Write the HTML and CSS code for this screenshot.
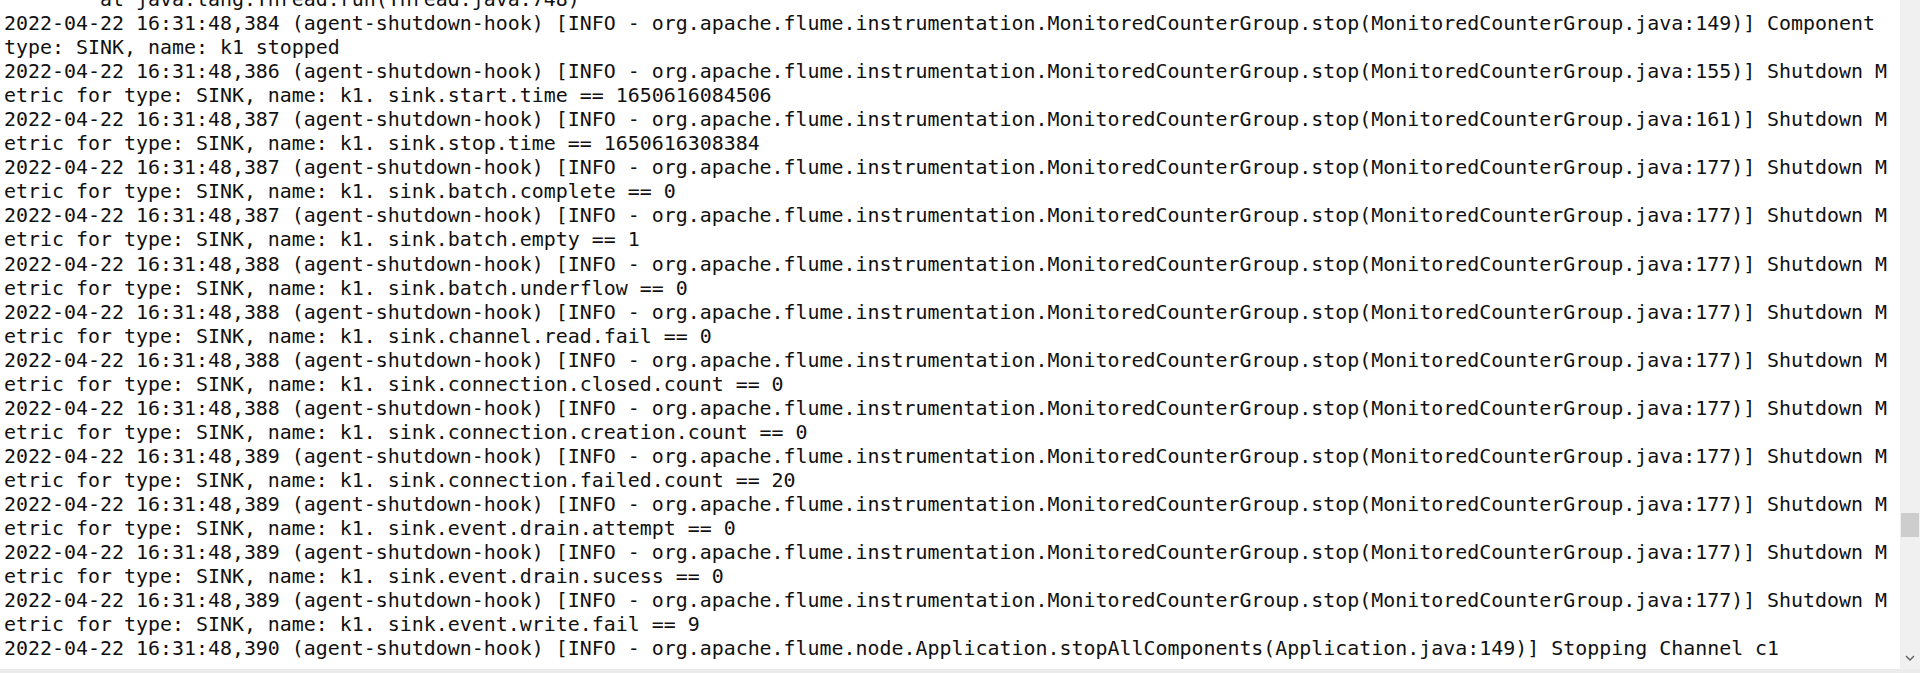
FILE: index.html
```html
<!DOCTYPE html>
<html lang="en">

<head>
    <meta charset="UTF-8">
    <meta name="viewport" content="width=device-width, initial-scale=1.0">
    <title>flume-ng agent</title>
    <link rel="stylesheet" href="styles.css">
</head>

<body>
    <div class="window">
        <div class="console">
            <div class="output">
                <div class="line">        at java.lang.Thread.run(Thread.java:748)</div>
                <div class="line">2022-04-22 16:31:48,384 (agent-shutdown-hook) [INFO - org.apache.flume.instrumentation.MonitoredCounterGroup.stop(MonitoredCounterGroup.java:149)] Component</div>
                <div class="line">type: SINK, name: k1 stopped</div>
                <div class="line">2022-04-22 16:31:48,386 (agent-shutdown-hook) [INFO - org.apache.flume.instrumentation.MonitoredCounterGroup.stop(MonitoredCounterGroup.java:155)] Shutdown M</div>
                <div class="line">etric for type: SINK, name: k1. sink.start.time == 1650616084506</div>
                <div class="line">2022-04-22 16:31:48,387 (agent-shutdown-hook) [INFO - org.apache.flume.instrumentation.MonitoredCounterGroup.stop(MonitoredCounterGroup.java:161)] Shutdown M</div>
                <div class="line">etric for type: SINK, name: k1. sink.stop.time == 1650616308384</div>
                <div class="line">2022-04-22 16:31:48,387 (agent-shutdown-hook) [INFO - org.apache.flume.instrumentation.MonitoredCounterGroup.stop(MonitoredCounterGroup.java:177)] Shutdown M</div>
                <div class="line">etric for type: SINK, name: k1. sink.batch.complete == 0</div>
                <div class="line">2022-04-22 16:31:48,387 (agent-shutdown-hook) [INFO - org.apache.flume.instrumentation.MonitoredCounterGroup.stop(MonitoredCounterGroup.java:177)] Shutdown M</div>
                <div class="line">etric for type: SINK, name: k1. sink.batch.empty == 1</div>
                <div class="line">2022-04-22 16:31:48,388 (agent-shutdown-hook) [INFO - org.apache.flume.instrumentation.MonitoredCounterGroup.stop(MonitoredCounterGroup.java:177)] Shutdown M</div>
                <div class="line">etric for type: SINK, name: k1. sink.batch.underflow == 0</div>
                <div class="line">2022-04-22 16:31:48,388 (agent-shutdown-hook) [INFO - org.apache.flume.instrumentation.MonitoredCounterGroup.stop(MonitoredCounterGroup.java:177)] Shutdown M</div>
                <div class="line">etric for type: SINK, name: k1. sink.channel.read.fail == 0</div>
                <div class="line">2022-04-22 16:31:48,388 (agent-shutdown-hook) [INFO - org.apache.flume.instrumentation.MonitoredCounterGroup.stop(MonitoredCounterGroup.java:177)] Shutdown M</div>
                <div class="line">etric for type: SINK, name: k1. sink.connection.closed.count == 0</div>
                <div class="line">2022-04-22 16:31:48,388 (agent-shutdown-hook) [INFO - org.apache.flume.instrumentation.MonitoredCounterGroup.stop(MonitoredCounterGroup.java:177)] Shutdown M</div>
                <div class="line">etric for type: SINK, name: k1. sink.connection.creation.count == 0</div>
                <div class="line">2022-04-22 16:31:48,389 (agent-shutdown-hook) [INFO - org.apache.flume.instrumentation.MonitoredCounterGroup.stop(MonitoredCounterGroup.java:177)] Shutdown M</div>
                <div class="line">etric for type: SINK, name: k1. sink.connection.failed.count == 20</div>
                <div class="line">2022-04-22 16:31:48,389 (agent-shutdown-hook) [INFO - org.apache.flume.instrumentation.MonitoredCounterGroup.stop(MonitoredCounterGroup.java:177)] Shutdown M</div>
                <div class="line">etric for type: SINK, name: k1. sink.event.drain.attempt == 0</div>
                <div class="line">2022-04-22 16:31:48,389 (agent-shutdown-hook) [INFO - org.apache.flume.instrumentation.MonitoredCounterGroup.stop(MonitoredCounterGroup.java:177)] Shutdown M</div>
                <div class="line">etric for type: SINK, name: k1. sink.event.drain.sucess == 0</div>
                <div class="line">2022-04-22 16:31:48,389 (agent-shutdown-hook) [INFO - org.apache.flume.instrumentation.MonitoredCounterGroup.stop(MonitoredCounterGroup.java:177)] Shutdown M</div>
                <div class="line">etric for type: SINK, name: k1. sink.event.write.fail == 9</div>
                <div class="line">2022-04-22 16:31:48,390 (agent-shutdown-hook) [INFO - org.apache.flume.node.Application.stopAllComponents(Application.java:149)] Stopping Channel c1</div>
            </div>
        </div>
        <div class="scrollbar">
            <div class="thumb"></div>
            <div class="arrow">
                <svg width="10" height="6" viewBox="0 0 10 6">
                    <path d="M1 1 L5 5 L9 1" fill="none" stroke="#606060" stroke-width="1.4" />
                </svg>
            </div>
        </div>
    </div>
    <div class="hbar"></div>
</body>

</html>
```

FILE: styles.css
```css
html,
body {
    margin: 0;
    padding: 0;
    height: 100%;
    overflow: hidden;
    background-color: #ffffff;
}

.window {
    display: flex;
    height: 669px;
}

.console {
    flex: 1;
    overflow: hidden;
    padding-left: 4px;
}

.console .output {
    margin-top: -12px;

    font-family: "DejaVu Sans Mono", "Liberation Mono", monospace;
    font-size: 19.93px;
    line-height: 24.05px;
    color: #111111;
}

.console .line {
    white-space: pre;
}

.scrollbar {
    width: 20px;
    flex-shrink: 0;
    background-color: #f0f0f0;

    display: flex;
    flex-direction: column;
    align-items: center;
}

.scrollbar .thumb {
    margin-top: 513px;
    width: 18px;
    height: 24px;
    background-color: #cdcdcd;
}

.scrollbar .arrow {
    margin-top: auto;
    margin-bottom: 8px;
    height: 6px;
    display: flex;
}

.hbar {
    height: 4px;
    background-color: #ebebeb;
}
```
